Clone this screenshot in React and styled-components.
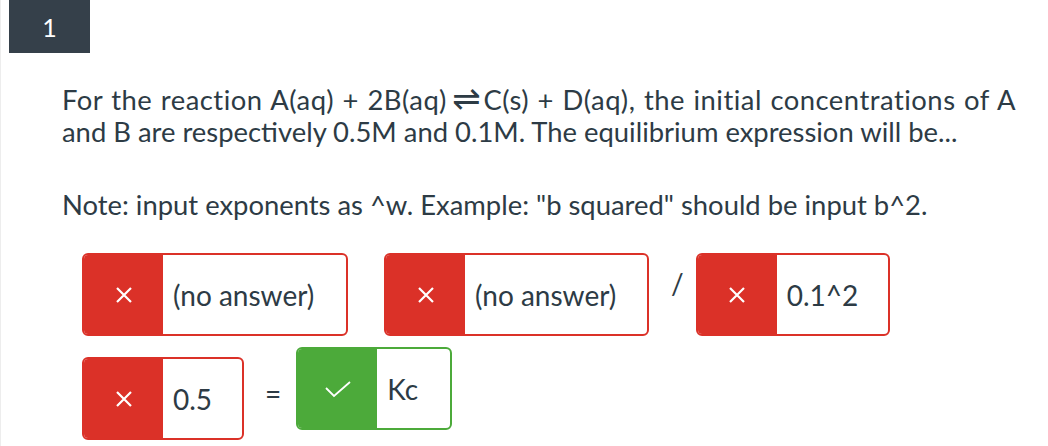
import React from "react";
import styled, { createGlobalStyle } from "styled-components";

const GlobalStyle = createGlobalStyle`
  body {
    margin: 0;
    background: #ffffff;
    font-family: Lato, "Open Sans", "Liberation Sans", sans-serif;
    color: #2d3b45;
  }
`;

const Page = styled.div`
  border-left: 1px solid #ededed;
  padding-left: 8px;
  min-height: 446px;
  box-sizing: border-box;
`;

const Badge = styled.div`
  width: 81px;
  height: 53px;
  background: #35404a;
  color: #ffffff;
  font-size: 25px;
  display: flex;
  align-items: center;
  justify-content: center;
`;

const Question = styled.div`
  padding-left: 53px;
  padding-top: 31px;
`;

const Text = styled.p`
  margin: 0 0 ${(p) => p.gap || 0}px 0;
  font-size: 27.4px;
  line-height: 32px;
  white-space: nowrap;
  word-spacing: ${(p) => p.words || 0}px;
  letter-spacing: ${(p) => p.letters || 0}px;
`;

const Arrow = styled.span`
  font-family: "DejaVu Sans", sans-serif;
  font-size: 34px;
  line-height: 0;
  margin: 0 3px 0 5px;
  letter-spacing: 0;
`;

const Answers = styled.div`
  display: flex;
  flex-direction: column;
  gap: 11px;
  padding-left: 20px;
  margin-top: 32px;
`;

const Row = styled.div`
  display: flex;
  align-items: flex-start;
`;

const Box = styled.div`
  display: flex;
  box-sizing: border-box;
  width: ${(p) => p.width}px;
  height: 83px;
  margin-top: ${(p) => p.offset || 0}px;
  margin-right: ${(p) => p.space || 0}px;
  border: 2px solid ${(p) => (p.ok ? "#4caa3a" : "#db3128")};
  border-radius: 6px;
  overflow: hidden;
  background: #ffffff;
`;

const Mark = styled.div`
  width: 79px;
  flex: none;
  background: ${(p) => (p.ok ? "#4caa3a" : "#db3128")};
  display: flex;
  align-items: center;
  justify-content: center;
`;

const Value = styled.div`
  display: flex;
  align-items: center;
  padding-left: 10px;
  font-size: 28px;
`;

const Operator = styled.span`
  font-size: 28px;
  line-height: 32px;
  margin-top: ${(p) => p.top}px;
  margin-right: ${(p) => p.space}px;
`;

const Cross = () => (
  <svg width="18" height="18" viewBox="0 0 18 18">
    <path d="M2 2L16 16M16 2L2 16" stroke="#fff" strokeWidth="2.2" fill="none" />
  </svg>
);

const Check = () => (
  <svg width="28" height="18" viewBox="0 0 28 18">
    <path d="M2 8L10 16L26 2" stroke="#fff" strokeWidth="1.8" fill="none" />
  </svg>
);

const Answer = ({ ok, value, width, offset, space }) => (
  <Box ok={ok} width={width} offset={offset} space={space}>
    <Mark ok={ok}>{ok ? <Check /> : <Cross />}</Mark>
    <Value>{value}</Value>
  </Box>
);

export default function App() {
  return (
    <>
      <GlobalStyle />
      <Page>
        <Badge>1</Badge>
        <Question>
          <Text words={1} letters={0.5}>
            For the reaction A(aq) + 2B(aq)<Arrow>⇌</Arrow>C(s) + D(aq), the
            initial concentrations of A
          </Text>
          <Text gap={41}>
            and B are respectively 0.5M and 0.1M. The equilibrium expression
            will be...
          </Text>
          <Text>
            Note: input exponents as ^w. Example: "b squared" should be input
            b^2.
          </Text>
          <Answers>
            <Row>
              <Answer value="(no answer)" width={266} space={36} />
              <Answer value="(no answer)" width={265} space={22} />
              <Operator top={14} space={12}>
                /
              </Operator>
              <Answer value="0.1^2" width={194} />
            </Row>
            <Row>
              <Answer value="0.5" width={162} offset={10} space={21} />
              <Operator top={30} space={15}>
                =
              </Operator>
              <Answer ok value="Kc" width={156} />
            </Row>
          </Answers>
        </Question>
      </Page>
    </>
  );
}
